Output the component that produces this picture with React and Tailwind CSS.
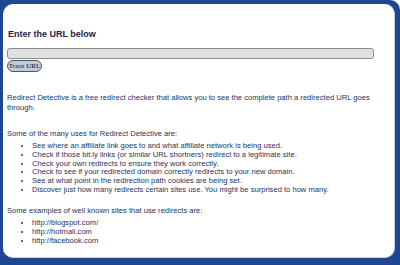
import React from 'react';

const uses = [
  'See where an affiliate link goes to and what affiliate network is being used.',
  'Check if those bit.ly links (or similar URL shortners) redirect to a legitimate site.',
  'Check your own redirects to ensure they work correctly.',
  'Check to see if your redirected domain correctly redirects to your new domain.',
  'See at what point in the redirection path cookies are being set.',
  'Discover just how many redirects certain sites use. You might be surprised to how many.',
];

const sites = ['http://blogspot.com/', 'http://hotmail.com', 'http://facebook.com'];

const App = () => {
  return (
    <div className="w-[400px] h-[265px] overflow-hidden bg-[#1f4690] rounded-tr-[10px] pt-[4px] pl-[3px] pr-[5px] pb-[7px] font-['Liberation_Sans',Arial,sans-serif]">
      <div className="h-full bg-white rounded-[10px] border-r border-b border-[#c8d2e4] pt-[25px] pl-[4px] pr-[18px] text-[#24345a]">
        {/* --- URL form --- */}
        <h2 className="text-[9px] leading-[11px] font-bold text-[#1c2440] pl-[1px]">Enter the URL below</h2>
        <div className="mt-[8px] w-[367px] h-[11px] bg-[#e1e1e1] border border-[#8c8c8c] rounded-[3px]" />
        <button className="block mt-[1px] h-[12px] w-[35px] rounded-full bg-[#bccbe2] border border-[#555a4a] text-[7px] leading-[10px] text-[#111] font-['Liberation_Serif',serif]">
          Trace URL
        </button>

        {/* --- intro --- */}
        <p className="mt-[21px] text-[7.6px] leading-[9.5px]">
          Redirect Detective is a free redirect checker that allows you to see the complete path a redirected URL goes through.
        </p>

        <p className="mt-[17px] text-[7.6px] leading-[9px]">Some of the many uses for Redirect Detective are:</p>
        <ul className="mt-[4px] text-[7.6px] leading-[8.8px] list-disc pl-[25px]">
          {uses.map((u) => (
            <li key={u}>{u}</li>
          ))}
        </ul>

        <p className="mt-[11px] text-[7.6px] leading-[9px]">Some examples of well known sites that use redirects are:</p>
        <ul className="mt-[3px] text-[7.6px] leading-[9px] list-disc pl-[25px]">
          {sites.map((s) => (
            <li key={s}>{s}</li>
          ))}
        </ul>
      </div>
    </div>
  );
};

export default App;
